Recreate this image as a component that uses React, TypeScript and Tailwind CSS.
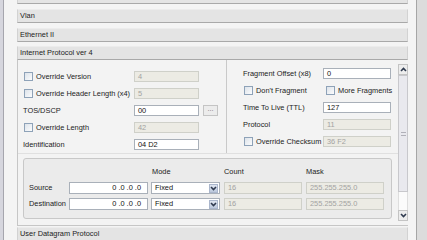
import React from "react";

function Check() {
  return (
    <span className="block w-[9px] h-[9px] shrink-0 border border-[#8ea2b8] bg-gradient-to-br from-[#dde3ea] to-[#fbfcfd]" />
  );
}

function Field({ value, disabled, w }: { value: string; disabled?: boolean; w: string }) {
  return (
    <div
      className={`${w} h-[11px] shrink-0 flex items-center pl-[3px] border ${
        disabled ? "bg-[#ecebe4] border-[#cfd0c9] text-[#a2a2a2]" : "bg-white border-[#a9b0b9] text-[#111]"
      }`}
    >
      {value}
    </div>
  );
}

function Header({ title, className = "" }: { title: string; className?: string }) {
  return (
    <div
      className={`h-[14px] shrink-0 flex items-center pl-[2px] bg-[#e4e4e4] border border-[#d2d2d2] border-t-[#ececec] border-b-[#a9a9a9] text-[#222] ${className}`}
    >
      {title}
    </div>
  );
}

function LeftRow({ label, check, value, disabled, extra }: { label: string; check?: boolean; value: string; disabled?: boolean; extra?: boolean }) {
  return (
    <div className="flex items-center h-[11px]">
      <div className="w-[111px] flex items-center">
        {check && (
          <span className="ml-[1px] mr-[3px]">
            <Check />
          </span>
        )}
        <span>{label}</span>
      </div>
      <Field value={value} disabled={disabled} w="w-[65px]" />
      {extra && (
        <div className="ml-[4px] w-[15px] h-[11px] flex items-center justify-center border border-[#c4c4c4] bg-[#ececec] text-[#777] leading-none pb-[3px]">
          ...
        </div>
      )}
    </div>
  );
}

function RightRow({ label, check, value, disabled }: { label: string; check?: boolean; value: string; disabled?: boolean }) {
  return (
    <div className="flex items-center h-[11px]">
      <div className="w-[80px] flex items-center">
        {check && (
          <span className="ml-[1px] mr-[3px]">
            <Check />
          </span>
        )}
        <span>{label}</span>
      </div>
      <Field value={value} disabled={disabled} w="w-[68px]" />
    </div>
  );
}

function Chevron({ up }: { up?: boolean }) {
  return (
    <svg width="7" height="5" viewBox="0 0 7 5">
      <path d={up ? "M1 4 L3.5 1.5 L6 4" : "M1 1 L3.5 3.5 L6 1"} stroke="#2f3a4f" strokeWidth="1.6" fill="none" />
    </svg>
  );
}

function Select() {
  return (
    <div className="w-[69px] h-[12px] shrink-0 flex items-center border border-[#a9b0b9] bg-white">
      <span className="flex-1 pl-[3px] text-[#111]">Fixed</span>
      <span className="w-[9px] h-[9px] mr-[1px] flex items-center justify-center bg-gradient-to-b from-[#dfe5f0] to-[#bcc8dc] border border-[#aab6cc]">
        <Chevron />
      </span>
    </div>
  );
}

function AddrRow({ label }: { label: string }) {
  return (
    <div className="flex items-center h-[12px]">
      <span className="w-[45px] pl-[5px]">{label}</span>
      <div className="w-[79px] h-[12px] shrink-0 flex items-center justify-end pr-[6px] border border-[#a9b0b9] bg-white text-[#111] whitespace-pre">
        {"0 .0 .0 .0"}
      </div>
      <div className="ml-[3px]">
        <Select />
      </div>
      <div className="ml-[4px] w-[78px] h-[12px] flex items-center pl-[3px] border border-[#cfd0c9] bg-[#ecebe4] text-[#a2a2a2]">16</div>
      <div className="ml-[4px] w-[78px] h-[12px] flex items-center pl-[3px] border border-[#cfd0c9] bg-[#ecebe4] text-[#a2a2a2]">255.255.255.0</div>
    </div>
  );
}

export default function App() {
  return (
    <div className="flex w-[427px] h-[240px] overflow-hidden bg-[#f4f4f4] font-['Liberation_Sans',Arial,sans-serif] text-[7.4px] leading-none text-[#222]">
      <div className="w-[3px] bg-[#d6d6de]" />
      <div className="w-px bg-[#a6a6ae]" />

      <div className="w-[412px] flex flex-col pl-[13px] pr-[8px]">
        <Header title="Media Access Protocol" className="-mt-[10px]" />
        <Header title="Vlan" className="mt-[5px]" />
        <Header title="Ethernet II" className="mt-[5px]" />
        <Header title="Internet Protocol ver 4" className="mt-[4px]" />

        <div className="h-[166px] shrink-0 flex border-l border-b border-[#c6c6c6] bg-[#f3f3f3]">
          <div className="w-[380px] flex flex-col">
            <div className="h-[94px] flex border-b border-[#e0e0e0]">
              <div className="w-[209px] border-r border-[#c9c9c9] pl-[5px] pt-[11px] flex flex-col gap-[6px]">
                <LeftRow label="Override Version" check value="4" disabled />
                <LeftRow label="Override Header Length (x4)" check value="5" disabled />
                <LeftRow label="TOS/DSCP" value="00" extra />
                <LeftRow label="Override Length" check value="42" disabled />
                <LeftRow label="Identification" value="04 D2" />
              </div>
              <div className="flex-1 pl-[16px] pt-[8px] flex flex-col gap-[6px]">
                <RightRow label="Fragment Offset (x8)" value="0" />
                <div className="flex items-center h-[11px]">
                  <div className="w-[80px] flex items-center">
                    <span className="ml-[1px] mr-[3px]">
                      <Check />
                    </span>
                    <span>Don't Fragment</span>
                  </div>
                  <div className="flex items-center">
                    <span className="ml-[3px] mr-[3px]">
                      <Check />
                    </span>
                    <span>More Fragments</span>
                  </div>
                </div>
                <RightRow label="Time To Live (TTL)" value="127" />
                <RightRow label="Protocol" value="11" disabled />
                <RightRow label="Override Checksum" check value="36 F2" disabled />
              </div>
            </div>

            <div className="pl-[5px] pt-[4px]">
              <div className="w-[369px] h-[61px] rounded-[3px] border border-[#c8c8c8] bg-[#ebebeb] pt-[8px] flex flex-col">
                <div className="flex h-[9px] items-center">
                  <span className="w-[128px]" />
                  <span className="w-[72px]">Mode</span>
                  <span className="w-[82px]">Count</span>
                  <span>Mask</span>
                </div>
                <div className="mt-[6px] flex flex-col gap-[4px]">
                  <AddrRow label="Source" />
                  <AddrRow label="Destination" />
                </div>
              </div>
            </div>
          </div>

          <div className="w-[10px] pt-[4px] flex flex-col">
            <div className="h-[11px] flex items-center justify-center border border-[#c4c4c4] bg-[#ededed]">
              <Chevron up />
            </div>
            <div className="h-[117px] flex items-center justify-center border border-[#c8c8cc] bg-[#e9e9ee]">
              <div className="w-[5px] h-[4px] border-y border-[#b0b0b8]" />
            </div>
            <div className="h-[18px] bg-[#fbfbfb] border-x border-[#dedede]" />
            <div className="h-[11px] flex items-center justify-center border border-[#c4c4c4] bg-[#ededed]">
              <Chevron />
            </div>
          </div>
        </div>

        <Header title="User Datagram Protocol" className="mt-[1px]" />
      </div>

      <div className="w-px bg-[#a6a6a6]" />
      <div className="flex-1 bg-[#dcdcdc]" />
    </div>
  );
}
